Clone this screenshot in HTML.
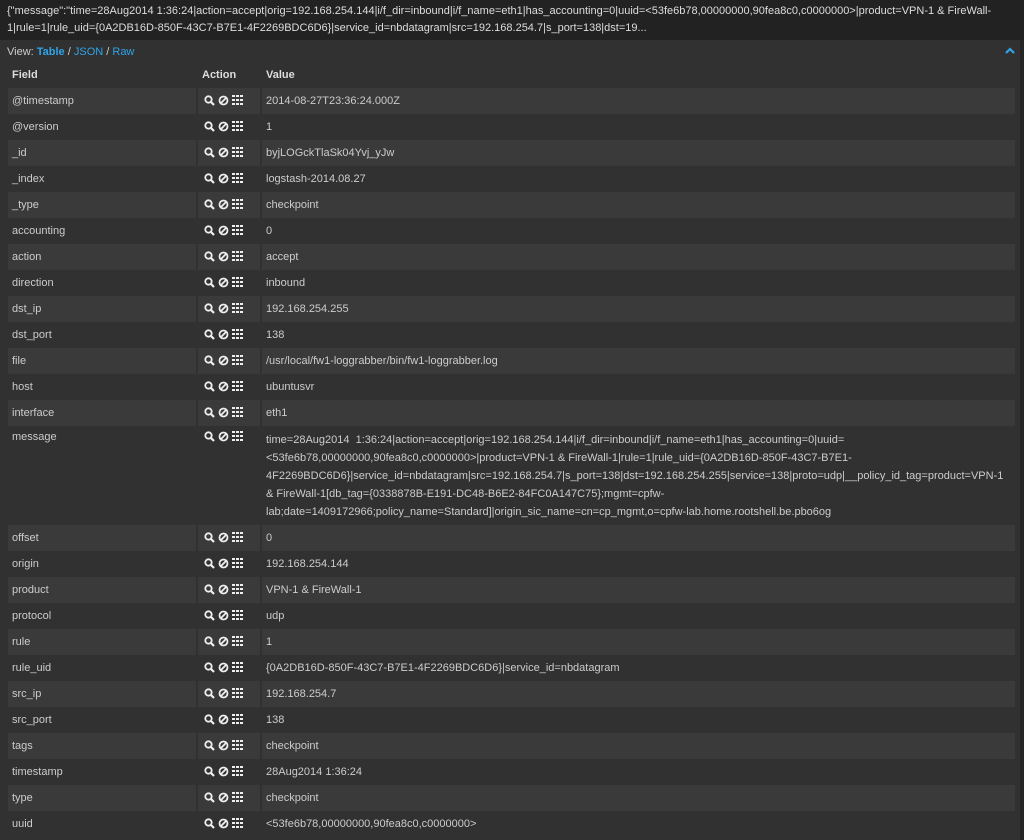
<!DOCTYPE html>
<html><head><style>
*{margin:0;padding:0;box-sizing:border-box}
body{width:1024px;height:840px;background:#222;font-family:"Liberation Sans",sans-serif;font-size:11px;color:#ccc;overflow:hidden;position:relative}
.top{position:absolute;left:7px;top:3px;width:1012px;line-height:17px;color:#ddd;white-space:nowrap}
.panel{position:absolute;left:0;top:40px;width:1020px;height:800px;background:#313131}
.sb{position:absolute;left:1020px;top:40px;width:4px;height:800px;background:#262626}
.view{position:absolute;left:7px;top:6px;color:#ccc}
.view a{color:#2fa4e7}
.view b{color:#2fa4e7}
.caret{position:absolute;left:1005px;top:7px}
table{position:absolute;left:8px;top:22px;width:1007px;border-collapse:collapse}
td,th{padding:0 4px;height:26px;vertical-align:middle;text-align:left;border-left:2px solid #313131}
td:first-child,th:first-child{border-left:0}
th{font-weight:bold;color:#ddd;height:26px}
tbody.d tr:nth-child(odd) td{background:#3a3a3a}
tbody.d tr:nth-child(even) td{background:#313131}
td.a{width:62px;padding-left:6px;white-space:nowrap}
td.f{width:189px}
.ic{display:inline-block;vertical-align:middle;margin-right:3px;position:relative;top:-1px}
td.m{line-height:18px;padding-top:3px;padding-bottom:4px;vertical-align:top}
tr.mr td{vertical-align:top;padding-top:5px}
</style></head><body>
<div class="top">{"message":"time=28Aug2014 1:36:24|action=accept|orig=192.168.254.144|i/f_dir=inbound|i/f_name=eth1|has_accounting=0|uuid=&lt;53fe6b78,00000000,90fea8c0,c0000000&gt;|product=VPN-1 &amp; FireWall-<br>1|rule=1|rule_uid={0A2DB16D-850F-43C7-B7E1-4F2269BDC6D6}|service_id=nbdatagram|src=192.168.254.7|s_port=138|dst=19...</div>
<div class="panel">
<div class="view">View: <b>Table</b> / <a>JSON</a> / <a>Raw</a></div>
<svg class="caret" width="10" height="7" viewBox="0 0 10 7"><path d="M1 6L5 2L9 6" stroke="#2fa4e7" stroke-width="2.2" fill="none"/></svg>
<table>
<thead><tr><th style="width:189px">Field</th><th style="width:64px">Action</th><th>Value</th></tr></thead>
<tbody class="d" id="t"></tbody>
</table>
</div>
<div class="sb"></div>
<script>
var rows=[["@timestamp","2014-08-27T23:36:24.000Z"],["@version","1"],["_id","byjLOGckTlaSk04Yvj_yJw"],["_index","logstash-2014.08.27"],["_type","checkpoint"],["accounting","0"],["action","accept"],["direction","inbound"],["dst_ip","192.168.254.255"],["dst_port","138"],["file","/usr/local/fw1-loggrabber/bin/fw1-loggrabber.log"],["host","ubuntusvr"],["interface","eth1"],["message","time=28Aug2014&nbsp; 1:36:24|action=accept|orig=192.168.254.144|i/f_dir=inbound|i/f_name=eth1|has_accounting=0|uuid=<br>&lt;53fe6b78,00000000,90fea8c0,c0000000&gt;|product=VPN-1 &amp; FireWall-1|rule=1|rule_uid={0A2DB16D-850F-43C7-B7E1-<br>4F2269BDC6D6}|service_id=nbdatagram|src=192.168.254.7|s_port=138|dst=192.168.254.255|service=138|proto=udp|__policy_id_tag=product=VPN-1<br>&amp; FireWall-1[db_tag={0338878B-E191-DC48-B6E2-84FC0A147C75};mgmt=cpfw-<br>lab;date=1409172966;policy_name=Standard]|origin_sic_name=cn=cp_mgmt,o=cpfw-lab.home.rootshell.be.pbo6og"],["offset","0"],["origin","192.168.254.144"],["product","VPN-1 &amp; FireWall-1"],["protocol","udp"],["rule","1"],["rule_uid","{0A2DB16D-850F-43C7-B7E1-4F2269BDC6D6}|service_id=nbdatagram"],["src_ip","192.168.254.7"],["src_port","138"],["tags","checkpoint"],["timestamp","28Aug2014 1:36:24"],["type","checkpoint"],["uuid","&lt;53fe6b78,00000000,90fea8c0,c0000000&gt;"]];
var ic='<svg class="ic" width="11" height="11" viewBox="0 0 11 11"><circle cx="4.5" cy="4.5" r="3.2" stroke="#eee" stroke-width="1.8" fill="none"/><path d="M7 7L10 10" stroke="#eee" stroke-width="2.2"/></svg><svg class="ic" width="11" height="11" viewBox="0 0 11 11"><circle cx="5.5" cy="5.5" r="4" stroke="#eee" stroke-width="1.8" fill="none"/><path d="M3 8L8 3" stroke="#eee" stroke-width="1.8"/></svg><svg class="ic" width="11" height="10" viewBox="0 0 11 10"><g fill="#eee"><rect x="0" y="0" width="3" height="2"/><rect x="4" y="0" width="3" height="2"/><rect x="8" y="0" width="3" height="2"/><rect x="0" y="4" width="3" height="2"/><rect x="4" y="4" width="3" height="2"/><rect x="8" y="4" width="3" height="2"/><rect x="0" y="8" width="3" height="2"/><rect x="4" y="8" width="3" height="2"/><rect x="8" y="8" width="3" height="2"/></g></svg>';
var h='';rows.forEach(function(r){var m=r[0]=="message";h+='<tr'+(m?' class="mr"':'')+'><td class="f">'+r[0]+'</td><td class="a">'+ic+'</td><td'+(m?' class="m" style="height:98px"':'')+'>'+r[1]+'</td></tr>';});
document.getElementById('t').innerHTML=h;
</script>
</body></html>
